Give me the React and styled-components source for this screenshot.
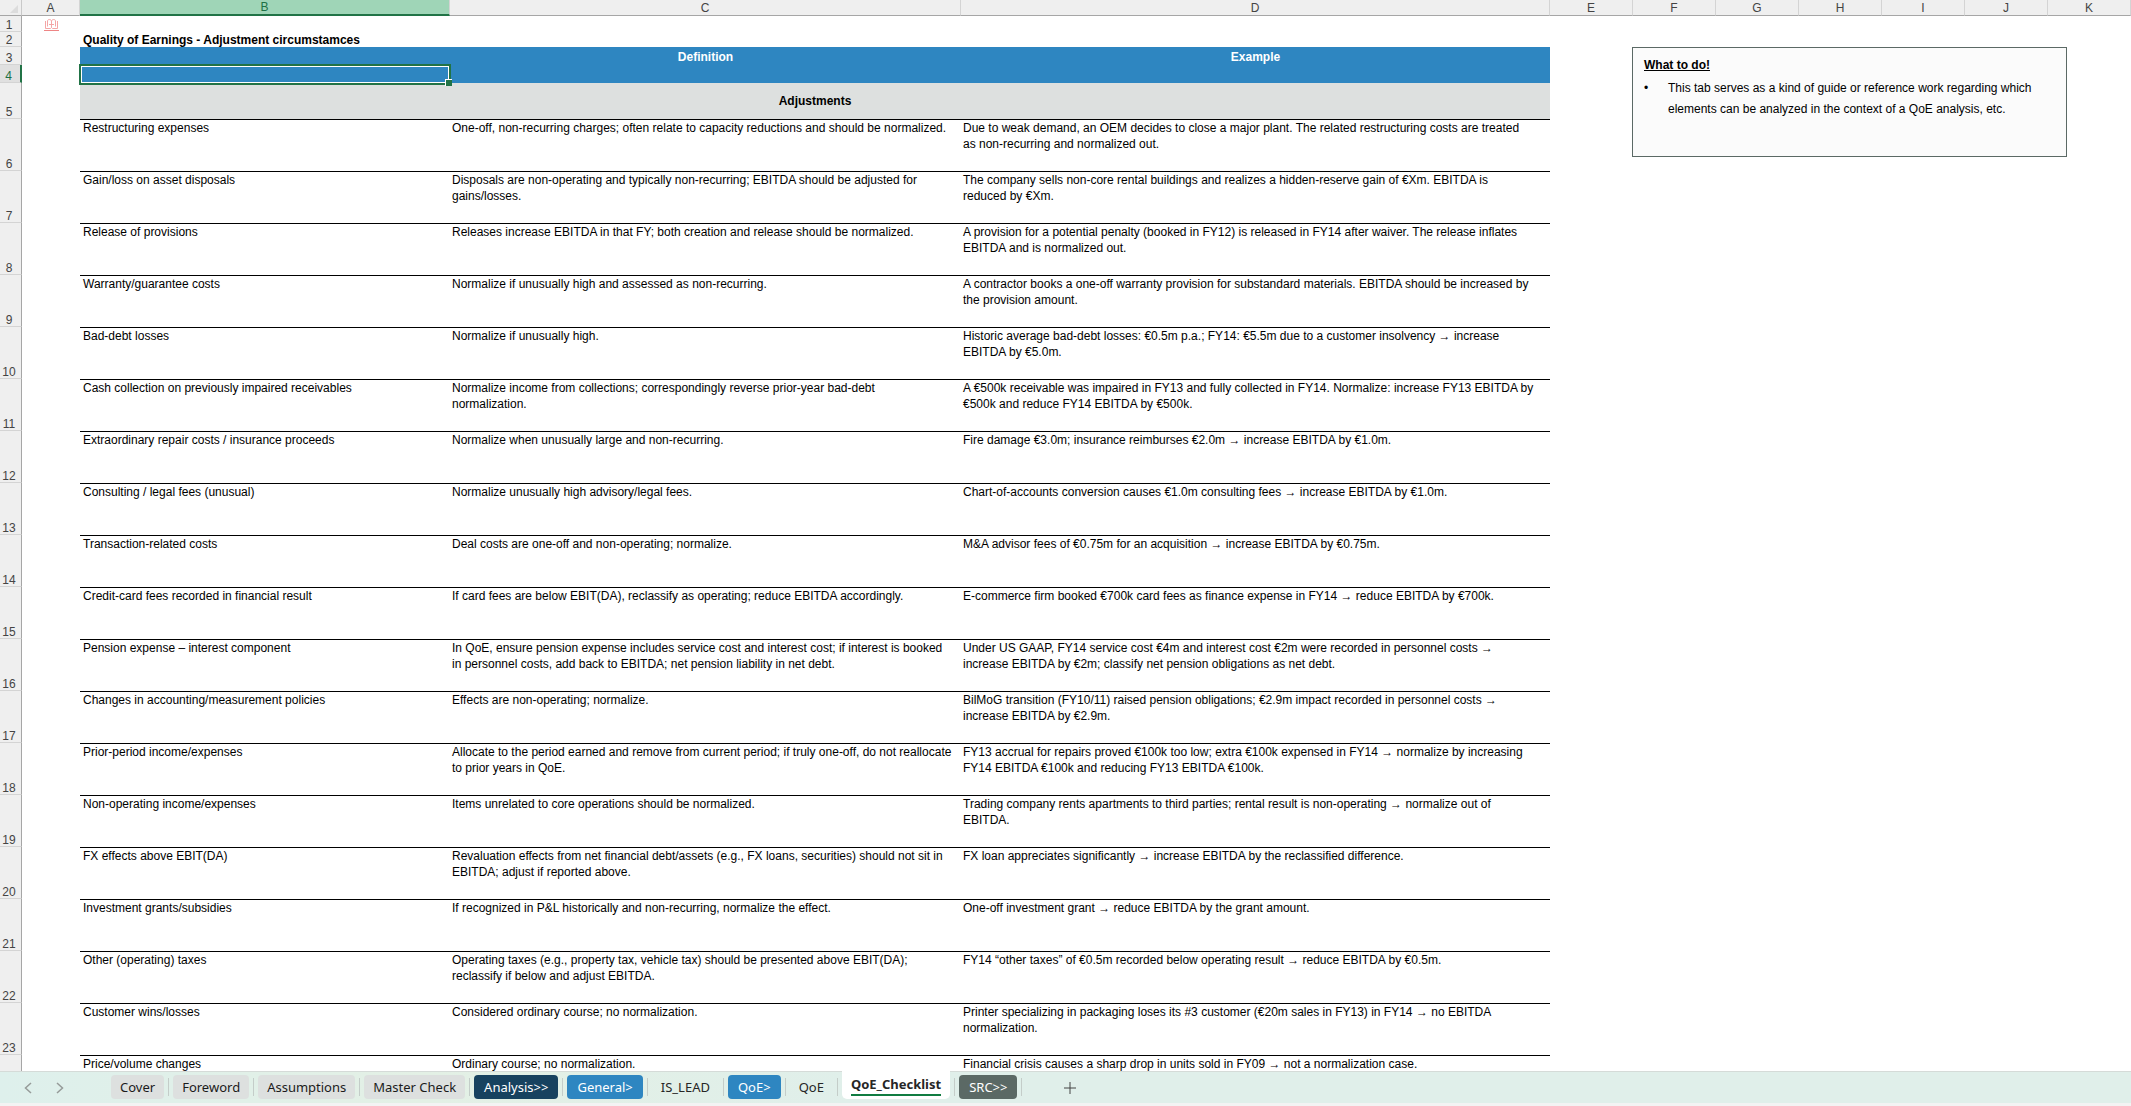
import React from 'react';
import styled, { createGlobalStyle } from 'styled-components';

const rows = [
  ['Restructuring expenses', 'One-off, non-recurring charges; often relate to capacity reductions and should be normalized.', 'Due to weak demand, an OEM decides to close a major plant. The related restructuring costs are treated\nas non-recurring and normalized out.'],
  ['Gain/loss on asset disposals', 'Disposals are non-operating and typically non-recurring; EBITDA should be adjusted for\ngains/losses.', 'The company sells non-core rental buildings and realizes a hidden-reserve gain of €Xm. EBITDA is\nreduced by €Xm.'],
  ['Release of provisions', 'Releases increase EBITDA in that FY; both creation and release should be normalized.', 'A provision for a potential penalty (booked in FY12) is released in FY14 after waiver. The release inflates\nEBITDA and is normalized out.'],
  ['Warranty/guarantee costs', 'Normalize if unusually high and assessed as non-recurring.', 'A contractor books a one-off warranty provision for substandard materials. EBITDA should be increased by\nthe provision amount.'],
  ['Bad-debt losses', 'Normalize if unusually high.', 'Historic average bad-debt losses: €0.5m p.a.; FY14: €5.5m due to a customer insolvency → increase\nEBITDA by €5.0m.'],
  ['Cash collection on previously impaired receivables', 'Normalize income from collections; correspondingly reverse prior-year bad-debt\nnormalization.', 'A €500k receivable was impaired in FY13 and fully collected in FY14. Normalize: increase FY13 EBITDA by\n€500k and reduce FY14 EBITDA by €500k.'],
  ['Extraordinary repair costs / insurance proceeds', 'Normalize when unusually large and non-recurring.', 'Fire damage €3.0m; insurance reimburses €2.0m → increase EBITDA by €1.0m.'],
  ['Consulting / legal fees (unusual)', 'Normalize unusually high advisory/legal fees.', 'Chart-of-accounts conversion causes €1.0m consulting fees → increase EBITDA by €1.0m.'],
  ['Transaction-related costs', 'Deal costs are one-off and non-operating; normalize.', 'M&A advisor fees of €0.75m for an acquisition → increase EBITDA by €0.75m.'],
  ['Credit-card fees recorded in financial result', 'If card fees are below EBIT(DA), reclassify as operating; reduce EBITDA accordingly.', 'E-commerce firm booked €700k card fees as finance expense in FY14 → reduce EBITDA by €700k.'],
  ['Pension expense – interest component', 'In QoE, ensure pension expense includes service cost and interest cost; if interest is booked\nin personnel costs, add back to EBITDA; net pension liability in net debt.', 'Under US GAAP, FY14 service cost €4m and interest cost €2m were recorded in personnel costs →\nincrease EBITDA by €2m; classify net pension obligations as net debt.'],
  ['Changes in accounting/measurement policies', 'Effects are non-operating; normalize.', 'BilMoG transition (FY10/11) raised pension obligations; €2.9m impact recorded in personnel costs →\nincrease EBITDA by €2.9m.'],
  ['Prior-period income/expenses', 'Allocate to the period earned and remove from current period; if truly one-off, do not reallocate\nto prior years in QoE.', 'FY13 accrual for repairs proved €100k too low; extra €100k expensed in FY14 → normalize by increasing\nFY14 EBITDA €100k and reducing FY13 EBITDA €100k.'],
  ['Non-operating income/expenses', 'Items unrelated to core operations should be normalized.', 'Trading company rents apartments to third parties; rental result is non-operating → normalize out of\nEBITDA.'],
  ['FX effects above EBIT(DA)', 'Revaluation effects from net financial debt/assets (e.g., FX loans, securities) should not sit in\nEBITDA; adjust if reported above.', 'FX loan appreciates significantly → increase EBITDA by the reclassified difference.'],
  ['Investment grants/subsidies', 'If recognized in P&L historically and non-recurring, normalize the effect.', 'One-off investment grant → reduce EBITDA by the grant amount.'],
  ['Other (operating) taxes', 'Operating taxes (e.g., property tax, vehicle tax) should be presented above EBIT(DA);\nreclassify if below and adjust EBITDA.', 'FY14 “other taxes” of €0.5m recorded below operating result → reduce EBITDA by €0.5m.'],
  ['Customer wins/losses', 'Considered ordinary course; no normalization.', 'Printer specializing in packaging loses its #3 customer (€20m sales in FY13) in FY14 → no EBITDA\nnormalization.'],
  ['Price/volume changes', 'Ordinary course; no normalization.', 'Financial crisis causes a sharp drop in units sold in FY09 → not a normalization case.'],
];

const tabs = [
  { name: 'Cover', tone: 'grey' },
  { name: 'Foreword', tone: 'grey' },
  { name: 'Assumptions', tone: 'grey' },
  { name: 'Master Check', tone: 'grey' },
  { name: 'Analysis>>', tone: 'navy' },
  { name: 'General>', tone: 'blue' },
  { name: 'IS_LEAD', tone: 'plain' },
  { name: 'QoE>', tone: 'blue' },
  { name: 'QoE', tone: 'plain' },
  { name: 'QoE_Checklist', tone: 'active' },
  { name: 'SRC>>', tone: 'slate' },
];

const tones = {
  grey: { bg: '#dde0df', fg: '#1b1b1b', pad: 9 },
  navy: { bg: '#17425f', fg: '#fff', pad: 10 },
  blue: { bg: '#2e86c1', fg: '#fff', pad: 10 },
  slate: { bg: '#5b6965', fg: '#fff', pad: 10 },
  plain: { bg: 'transparent', fg: '#262626', pad: 9 },
};

const letters = ['A', 'B', 'C', 'D', 'E', 'F', 'G', 'H', 'I', 'J', 'K'];

function App() {
  return (
    <Window>
      <GlobalStyle />
      <Viewport>
        <Sheet>
          <colgroup>
            <Col $w={22} />
            <Col $w={58} />
            <Col $w={370} />
            <Col $w={511} />
            <Col $w={589} />
            {letters.slice(4).map(l => <Col key={l} $w={83} />)}
          </colgroup>
          <thead>
            <tr>
              <Corner aria-label="Select all">
                <svg width="8" height="8" viewBox="0 0 8 8"><path d="M8 0v8H0z" fill="#dcdcdc" /></svg>
              </Corner>
              {letters.map(l => (
                <ColHead key={l} scope="col" $active={l === 'B'}>{l}</ColHead>
              ))}
            </tr>
          </thead>
          <tbody>
            <Row $h={16}>
              <RowHead scope="row">1</RowHead>
              <LinkCell>
                <a href="#cover" aria-label="Back to cover">
                  <svg width="15" height="14" viewBox="0 0 15 14" fill="none" stroke="#f4a6a6">
                    <path d="M3.500 9.500V4C3.500 2 7 2 7.500 4 8 2 11.500 2 11.500 4v5.500" />
                    <path d="M1.500 4v7.500h5l1-1 1 1h5V4M7.500 4v6.500M5 7.500h5" />
                    <path d="M0 13.500h15" stroke="#ee8585" />
                  </svg>
                </a>
              </LinkCell>
              <td colSpan={10} />
            </Row>
            <Row $h={15}>
              <RowHead scope="row">2</RowHead>
              <td />
              <Title colSpan={3}>Quality of Earnings - Adjustment circumstamces</Title>
              <td colSpan={7} />
            </Row>
            <Row $h={18}>
              <RowHead scope="row">3</RowHead>
              <td />
              <Band />
              <Band>Definition</Band>
              <Band>Example</Band>
              <td />
              <NoteCell colSpan={6} rowSpan={4}>
                <Note>
                  <h2>What to do!</h2>
                  <ul>
                    <li>This tab serves as a kind of guide or reference work regarding which elements can be analyzed in the context of a QoE analysis, etc.</li>
                  </ul>
                </Note>
              </NoteCell>
            </Row>
            <Row $h={18}>
              <RowHead scope="row" $active>4</RowHead>
              <td />
              <Band><Selection /></Band>
              <Band />
              <Band />
              <td />
            </Row>
            <Row $h={36}>
              <RowHead scope="row">5</RowHead>
              <td />
              <Section colSpan={3}>Adjustments</Section>
              <td />
            </Row>
            {rows.map(([name, definition, example], i) => (
              <Row key={name} $h={52}>
                {/* the last row runs under the tab bar, its number is out of view */}
                <RowHead scope="row">{i < rows.length - 1 && i + 6}</RowHead>
                <td />
                <Cell $pad={3}>{name}</Cell>
                <Cell $pad={2}>{definition}</Cell>
                <Cell $pad={2}>{example}</Cell>
                <td colSpan={i === 0 ? 1 : 7} />
              </Row>
            ))}
          </tbody>
        </Sheet>
      </Viewport>
      <TabBar>
        <Arrows>
          <IconButton aria-label="Previous sheet">
            <svg width="8" height="12" viewBox="0 0 8 12"><path d="M7 1 1.500 6 7 11" /></svg>
          </IconButton>
          <IconButton aria-label="Next sheet">
            <svg width="8" height="12" viewBox="0 0 8 12"><path d="M1 1l5.500 5L1 11" /></svg>
          </IconButton>
        </Arrows>
        {tabs.map(({ name, tone }) => (
          <TabSlot key={name}>
            {tone === 'active'
              ? <ActiveTab><span>{name}</span></ActiveTab>
              : <Tab $tone={tones[tone]}>{name}</Tab>}
          </TabSlot>
        ))}
        <AddButton aria-label="New sheet">
          <svg width="12" height="12" viewBox="0 0 12 12"><path d="M6 0v12M0 6h12" /></svg>
        </AddButton>
      </TabBar>
      <Footer />
    </Window>
  );
}

export default App;

const GlobalStyle = createGlobalStyle`
  * {
    box-sizing: border-box;
  }
  body {
    margin: 0;
    background: #fff;
    color: #000;
    font-family: 'Liberation Sans', Arial, sans-serif;
    font-size: 12px;
  }
`;

const Window = styled.div`
  display: flex;
  flex-direction: column;
  height: 100vh;
`;

const Viewport = styled.main`
  flex: 1;
  min-height: 0;
  overflow: hidden;
`;

const Sheet = styled.table`
  width: 100%;
  table-layout: fixed;
  border-collapse: separate;
  border-spacing: 0;
  line-height: 16px;
  & td,
  & th {
    padding: 0;
  }
`;

const Col = styled.col`
  width: ${p => p.$w}px;
`;

const Row = styled.tr`
  height: ${p => p.$h}px;
`;

const Corner = styled.td`
  height: 16px;
  background: #efefef;
  border-right: 1px solid #c9c9c9;
  border-bottom: 1px solid #a6a6a6;
  & > svg {
    display: block;
    margin: 3px 3px 0 auto;
  }
`;

const ColHead = styled.th`
  height: 16px;
  line-height: 14px;
  font-weight: 400;
  vertical-align: bottom;
  color: ${p => (p.$active ? '#1e7145' : '#444')};
  background: ${p => (p.$active ? '#9fd5b7' : '#efefef')};
  border-right: 1px solid #d4d4d4;
  border-bottom: ${p => (p.$active ? '2px solid #217346' : '1px solid #a6a6a6')};
`;

const RowHead = styled.th`
  && {
    padding-right: 3px;
  }
  vertical-align: bottom;
  line-height: 12px;
  font-weight: 400;
  text-align: center;
  color: ${p => (p.$active ? '#1e7145' : '#444')};
  background: ${p => (p.$active ? '#e0e0e0' : '#efefef')};
  border-right: ${p => (p.$active ? '2px solid #217346' : '1px solid #a6a6a6')};
  border-bottom: 1px solid #d4d4d4;
`;

const LinkCell = styled.td`
  text-align: center;
  & svg {
    display: block;
    margin: 0 auto;
  }
`;

const Title = styled.td`
  && {
    padding-left: 3px;
  }
  font-weight: 700;
  line-height: 14px;
  vertical-align: bottom;
`;

const Band = styled.td`
  position: relative;
  background: #2e86c1;
  color: #fff;
  font-weight: 700;
  text-align: center;
  vertical-align: bottom;
`;

const Selection = styled.div`
  position: absolute;
  inset: -1px -1px -2px -1px;
  border: 2px solid #217346;
  box-shadow: inset 0 0 0 1px #fff;
  z-index: 1;
  &::after {
    content: '';
    position: absolute;
    right: -3px;
    bottom: -3px;
    width: 6px;
    height: 6px;
    background: #217346;
    border: solid #fff;
    border-width: 1px 0 0 1px;
  }
`;

const Section = styled.td`
  background: #dde0df;
  font-weight: 700;
  text-align: center;
`;

const Cell = styled.td`
  && {
    padding-left: ${p => p.$pad}px;
  }
  vertical-align: top;
  white-space: pre-line;
  border-top: 1px solid #000;
`;

const NoteCell = styled.td`
  vertical-align: top;
`;

const Note = styled.aside`
  width: 435px;
  height: 110px;
  margin-left: -1px;
  padding: 7px 11px;
  background: #fbfbfb;
  border: 1px solid #5b6965;
  line-height: 21px;
  & > h2 {
    margin: 0;
    font-size: 12px;
    text-decoration: underline;
  }
  & > ul {
    margin: 2px 0 0;
    padding: 0;
    list-style: none;
  }
  & li {
    display: grid;
    grid-template-columns: 24px 1fr;
  }
  & li::before {
    content: '•';
  }
`;

const TabBar = styled.nav`
  display: flex;
  flex: none;
  height: 32px;
  background: linear-gradient(90deg, #def0ec, #e3f0e5 20%, #e0efea 40%);
  border-top: 1px solid #d5dbd8;
  & button {
    padding: 0;
    border: 0;
    background: none;
    font-family: 'Noto Sans', 'Open Sans', sans-serif;
    font-size: 13px;
  }
  & button > svg {
    display: block;
    margin: 0 auto;
    fill: none;
    stroke: #969b99;
    stroke-width: 1.5;
  }
`;

const Arrows = styled.div`
  display: flex;
  width: 107px;
  padding-left: 12px;
`;

const IconButton = styled.button`
  width: 32px;
`;

const TabSlot = styled.div`
  position: relative;
  padding: 3px 5px 0 4px;
  &::after {
    content: '';
    position: absolute;
    right: 0;
    top: 6px;
    width: 1px;
    height: 18px;
    background: #c4cdc9;
  }
`;

const Tab = styled.button`
  && {
    height: 24px;
    padding: 0 ${p => p.$tone.pad}px;
    border-radius: 4px;
    color: ${p => p.$tone.fg};
    background: ${p => p.$tone.bg};
  }
`;

const ActiveTab = styled.button`
  && {
    height: 28px;
    margin-top: -4px;
    padding: 0 9px;
    border-radius: 0 0 5px 5px;
    background: #fff;
    color: #262626;
    font-weight: 700;
  }
  & > span {
    display: block;
    border-bottom: 2px solid #107c41;
    line-height: 20px;
  }
`;

const AddButton = styled.button`
  width: 96px;
  && > svg {
    stroke: #444;
    stroke-width: 1;
  }
`;

const Footer = styled.footer`
  flex: none;
  height: 3px;
  background: #f3f3f3;
`;
